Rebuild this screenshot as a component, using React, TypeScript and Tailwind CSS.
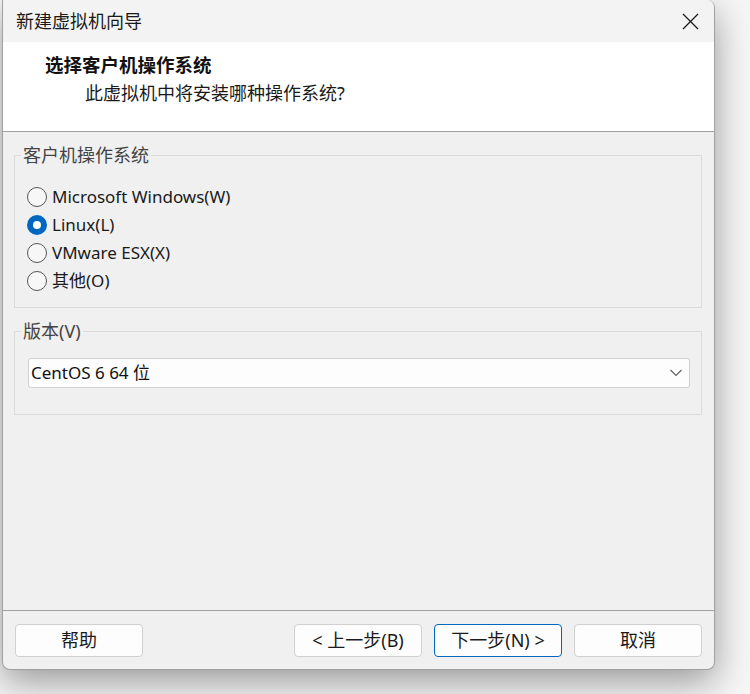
import React from "react";

const font = "font-['Noto_Sans','Noto_Sans_CJK_SC',sans-serif]";

function Radio({ label, checked }: { label: string; checked?: boolean }) {
  return (
    <div className="flex items-center h-[28px]">
      {checked ? (
        <span className="w-[20px] h-[20px] rounded-full bg-[#0067c0] flex items-center justify-center">
          <span className="w-[8px] h-[8px] rounded-full bg-white" />
        </span>
      ) : (
        <span className="w-[20px] h-[20px] rounded-full border border-[#555555] bg-[#f7f7f7]" />
      )}
      <span className="ml-[5px] text-[17px] text-[#1a1a1a] leading-[24px]">{label}</span>
    </div>
  );
}

function Btn({ children, primary }: { children: React.ReactNode; primary?: boolean }) {
  return (
    <button
      className={
        "w-[128px] h-[33px] rounded-[4px] bg-[#fdfdfd] text-[18px] text-[#1a1a1a] flex items-center justify-center border " +
        (primary ? "border-[#0067c0]" : "border-[#d0d0d0]")
      }
    >
      {children}
    </button>
  );
}

export default function App() {
  return (
    <div className={"w-[750px] h-[694px] bg-[#f6f6f6] overflow-hidden " + font}>
      <div className="ml-[2px] w-[713px] h-[670px] flex flex-col rounded-b-[8px] rounded-tr-[8px] border border-t-0 border-[#a0a0a0] bg-[#f0f0f0] shadow-[0_12px_36px_rgba(0,0,0,0.38)] overflow-hidden">
        {/* title bar */}
        <div className="h-[42px] shrink-0 bg-[#f3f3f3] flex items-center justify-between pl-[13px] pr-[15px]">
          <span className="text-[18px] text-[#1a1a1a] leading-[24px]">新建虚拟机向导</span>
          <svg width="17" height="17" viewBox="0 0 17 17">
            <path d="M1 1L16 16M16 1L1 16" stroke="#1a1a1a" strokeWidth="1.3" fill="none" />
          </svg>
        </div>
        {/* header */}
        <div className="h-[90px] shrink-0 bg-white border-b border-[#a0a0a0] pt-[11px]">
          <div className="pl-[42px] text-[18.5px] font-bold leading-[24px] text-[#111111]">选择客户机操作系统</div>
          <div className="pl-[82px] mt-[4px] text-[18px] leading-[24px] text-[#1a1a1a]">此虚拟机中将安装哪种操作系统?</div>
        </div>
        {/* body */}
        <div className="flex-1 pt-[11px]">
          <fieldset className="ml-[11px] w-[688px] border border-[#dcdcdc] pl-[12px] pt-[16px] pb-[12px]">
            <legend className="ml-[-6px] px-[2px] text-[18px] leading-[24px] text-[#444444]">客户机操作系统</legend>
            <Radio label="Microsoft Windows(W)" />
            <Radio label="Linux(L)" checked />
            <Radio label="VMware ESX(X)" />
            <Radio label="其他(O)" />
          </fieldset>
          <fieldset className="ml-[11px] mt-[11px] w-[688px] border border-[#dcdcdc] pl-[13px] pr-[11px] pt-[15px] pb-[26px]">
            <legend className="ml-[-7px] px-[2px] text-[18px] leading-[24px] text-[#444444]">版本(V)</legend>
            <div className="h-[30px] rounded-[3px] border border-[#d0d0d0] bg-[#fdfdfd] flex items-center justify-between pl-[2px] pr-[7px]">
              <span className="text-[17px] text-[#111111] leading-[24px]">CentOS 6 64 位</span>
              <svg width="12" height="8" viewBox="0 0 12 8">
                <path d="M0.5 1L6 6.5L11.5 1" stroke="#606060" strokeWidth="1.1" fill="none" />
              </svg>
            </div>
          </fieldset>
        </div>
        {/* footer */}
        <div className="h-[59px] shrink-0 border-t border-[#a0a0a0] pt-[13px] pl-[12px] pr-[12px] flex items-start justify-between">
          <Btn>帮助</Btn>
          <div className="flex gap-[12px]">
            <Btn>&lt; 上一步(B)</Btn>
            <Btn primary>下一步(N) &gt;</Btn>
            <Btn>取消</Btn>
          </div>
        </div>
      </div>
    </div>
  );
}
